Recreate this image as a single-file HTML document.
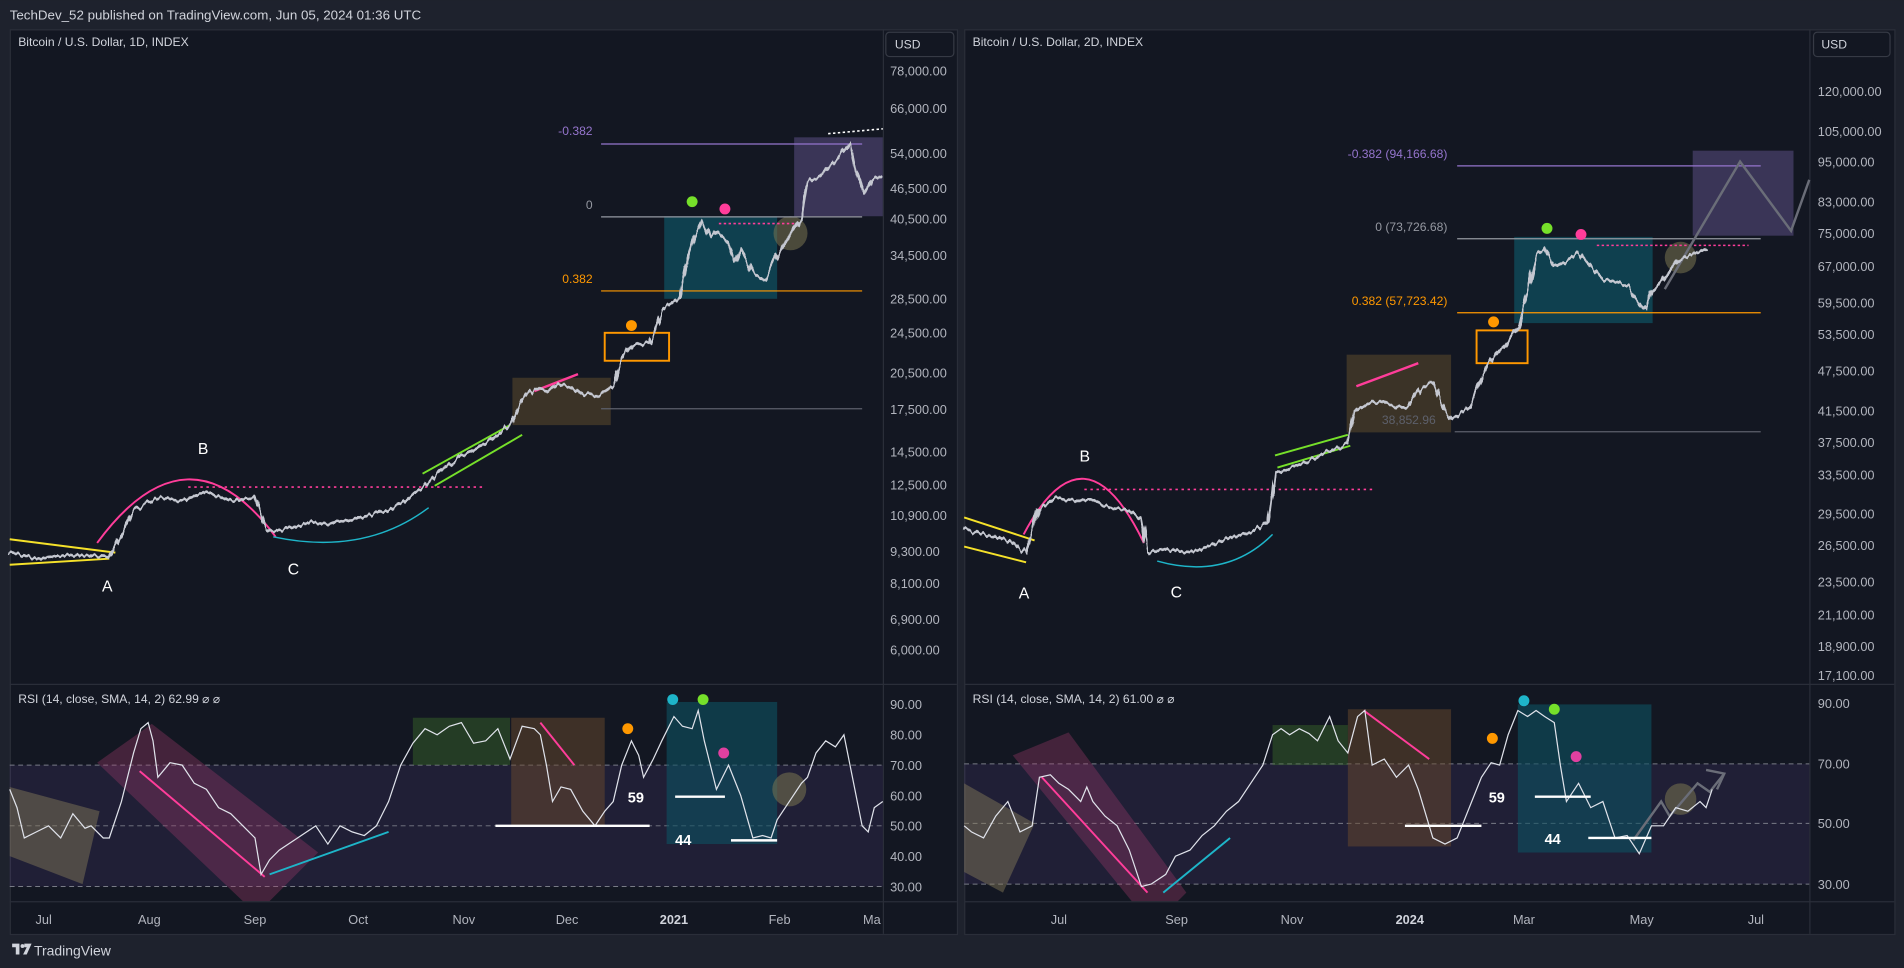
<!DOCTYPE html>
<html><head><meta charset="utf-8"><style>
html,body{margin:0;padding:0;background:#1e222d;overflow:hidden}
svg{display:block}
text{font-family:"Liberation Sans",sans-serif}
</style></head><body>
<svg width="1904" height="968" viewBox="0 0 1568 797" xmlns="http://www.w3.org/2000/svg">
<defs>
<filter id="jit" x="-5%" y="-20%" width="110%" height="140%">
<feTurbulence type="fractalNoise" baseFrequency="0.35 0.02" numOctaves="1" seed="3" result="n"/>
<feDisplacementMap in="SourceGraphic" in2="n" scale="7" xChannelSelector="G" yChannelSelector="R"/>
</filter>
</defs>
<rect width="1568" height="797" fill="#1e222d"/>
<text x="8" y="16" fill="#d1d4dc" font-size="11">TechDev_52 published on TradingView.com, Jun 05, 2024 01:36 UTC</text>

<rect x="8.5" y="24.5" width="780" height="745" fill="#131722" stroke="#2a2e39"/>
<rect x="794.5" y="24.5" width="766" height="745" fill="#131722" stroke="#2a2e39"/>
<g stroke="#2a2e39" stroke-width="1">
<line x1="727.5" y1="24" x2="727.5" y2="769"/><line x1="8" y1="563.5" x2="788" y2="563.5"/><line x1="8" y1="742.5" x2="788" y2="742.5"/>
<line x1="1490.5" y1="24" x2="1490.5" y2="769"/><line x1="794" y1="563.5" x2="1560" y2="563.5"/><line x1="794" y1="742.5" x2="1560" y2="742.5"/>
</g>

<rect x="8" y="630" width="719" height="100" fill="#7e57c2" fill-opacity="0.13"/>
<rect x="794" y="629" width="696" height="99" fill="#7e57c2" fill-opacity="0.13"/>
<g stroke="#787b86" stroke-dasharray="4 3" stroke-width="0.8">
<line x1="8" y1="630" x2="727" y2="630"/><line x1="8" y1="680" x2="727" y2="680"/><line x1="8" y1="730" x2="727" y2="730"/>
<line x1="794" y1="629" x2="1490" y2="629"/><line x1="794" y1="678" x2="1490" y2="678"/><line x1="794" y1="728" x2="1490" y2="728"/>
</g>

<g fill="#d1d4dc" font-size="10">
<text x="15" y="38">Bitcoin / U.S. Dollar, 1D, INDEX</text>
<text x="801" y="38">Bitcoin / U.S. Dollar, 2D, INDEX</text>
<text x="15" y="579">RSI (14, close, SMA, 14, 2)  62.99  ⌀  ⌀</text>
<text x="801" y="579">RSI (14, close, SMA, 14, 2)  61.00  ⌀  ⌀</text>
</g>
<rect x="729.5" y="26.5" width="56" height="20" rx="3" fill="#131722" stroke="#363a45"/>
<rect x="1493.5" y="26.5" width="63" height="20" rx="3" fill="#131722" stroke="#363a45"/>
<text x="737" y="40" fill="#d1d4dc" font-size="10">USD</text>
<text x="1500" y="40" fill="#d1d4dc" font-size="10">USD</text>

<g fill="#b2b5be" font-size="10.5">
<text x="733" y="62">78,000.00</text><text x="733" y="93">66,000.00</text><text x="733" y="130">54,000.00</text><text x="733" y="159">46,500.00</text><text x="733" y="184">40,500.00</text><text x="733" y="214">34,500.00</text><text x="733" y="250">28,500.00</text><text x="733" y="278">24,500.00</text><text x="733" y="311">20,500.00</text><text x="733" y="341">17,500.00</text><text x="733" y="376">14,500.00</text><text x="733" y="403">12,500.00</text><text x="733" y="428">10,900.00</text><text x="733" y="458">9,300.00</text><text x="733" y="484">8,100.00</text><text x="733" y="514">6,900.00</text><text x="733" y="539">6,000.00</text>
<text x="733" y="584">90.00</text><text x="733" y="609">80.00</text><text x="733" y="634">70.00</text><text x="733" y="659">60.00</text><text x="733" y="684">50.00</text><text x="733" y="709">40.00</text><text x="733" y="734">30.00</text>
<text x="1497" y="79">120,000.00</text><text x="1497" y="112">105,000.00</text><text x="1497" y="137">95,000.00</text><text x="1497" y="170">83,000.00</text><text x="1497" y="196">75,000.00</text><text x="1497" y="223">67,000.00</text><text x="1497" y="253">59,500.00</text><text x="1497" y="279">53,500.00</text><text x="1497" y="309">47,500.00</text><text x="1497" y="342">41,500.00</text><text x="1497" y="368">37,500.00</text><text x="1497" y="395">33,500.00</text><text x="1497" y="427">29,500.00</text><text x="1497" y="453">26,500.00</text><text x="1497" y="483">23,500.00</text><text x="1497" y="510">21,100.00</text><text x="1497" y="536">18,900.00</text><text x="1497" y="560">17,100.00</text>
<text x="1497" y="583">90.00</text><text x="1497" y="633">70.00</text><text x="1497" y="682">50.00</text><text x="1497" y="732">30.00</text>
</g>
<g fill="#b2b5be" font-size="10.5" text-anchor="middle">
<text x="36" y="761">Jul</text><text x="123" y="761">Aug</text><text x="210" y="761">Sep</text><text x="295" y="761">Oct</text><text x="382" y="761">Nov</text><text x="467" y="761">Dec</text><text x="555" y="761" font-weight="bold" fill="#d1d4dc">2021</text><text x="642" y="761">Feb</text><text x="718" y="761">Ma</text>
<text x="872" y="761">Jul</text><text x="969" y="761">Sep</text><text x="1064" y="761">Nov</text><text x="1161" y="761" font-weight="bold" fill="#d1d4dc">2024</text><text x="1255" y="761">Mar</text><text x="1352" y="761">May</text><text x="1446" y="761">Jul</text>
</g>

<!-- LEFT MAIN -->
<rect x="422" y="311" width="81" height="39" fill="#5d4a2c" fill-opacity="0.55"/>
<rect x="547" y="178" width="93" height="68" fill="#0e5263" fill-opacity="0.7"/>
<rect x="654" y="113" width="73" height="65" fill="#6a5a9a" fill-opacity="0.45"/>
<circle cx="651" cy="192" r="14" fill="#7a7550" fill-opacity="0.55"/>
<line x1="495" y1="118.5" x2="710" y2="118.5" stroke="#9575cd"/>
<line x1="495" y1="178.5" x2="710" y2="178.5" stroke="#9598a1"/>
<line x1="495" y1="239.5" x2="710" y2="239.5" stroke="#ff9800"/>
<line x1="495" y1="336.5" x2="710" y2="336.5" stroke="#5d606b"/>
<g font-size="10" text-anchor="end"><text x="488" y="111" fill="#9575cd">-0.382</text><text x="488" y="172" fill="#9598a1">0</text><text x="488" y="233" fill="#ff9800">0.382</text></g>
<line x1="8" y1="444" x2="95" y2="455" stroke="#f5e12a" stroke-width="1.6"/>
<line x1="8" y1="465" x2="90" y2="460" stroke="#f5e12a" stroke-width="1.6"/>
<path d="M80 447 Q155 345 227 442" fill="none" stroke="#ff3d9a" stroke-width="1.6"/>
<line x1="155" y1="401" x2="400" y2="401" stroke="#ff3d9a" stroke-dasharray="2 3" stroke-width="1.3"/>
<path d="M225 442 Q300 458 353 418" fill="none" stroke="#1eb5c9" stroke-width="1.2"/>
<line x1="348" y1="390" x2="420" y2="350" stroke="#76e02a" stroke-width="1.6"/>
<line x1="358" y1="400" x2="430" y2="358" stroke="#76e02a" stroke-width="1.6"/>
<line x1="440" y1="322" x2="476" y2="308" stroke="#ff3d9a" stroke-width="2"/>
<rect x="498" y="274" width="53" height="23" fill="none" stroke="#ff9800" stroke-width="1.6"/>
<line x1="592" y1="184" x2="655" y2="184" stroke="#ff3d9a" stroke-dasharray="2 2" stroke-width="1.3"/>
<line x1="682" y1="110" x2="727" y2="106" stroke="#fff" stroke-dasharray="2 2" stroke-width="1.3"/>
<polyline filter="url(#jit)" fill="none" stroke="#c4c7d0" stroke-width="2.2" stroke-linejoin="round" points="8,455 30,460 60,457 90,458 100,440 110,420 130,410 150,412 170,405 190,412 210,410 220,438 240,435 255,430 270,432 300,425 320,420 330,415 350,400 360,390 380,375 400,365 420,350 430,330 440,320 450,322 460,315 470,318 480,325 495,325 505,318 512,295 520,285 535,282 545,255 560,245 565,220 570,200 578,180 585,195 590,190 600,200 605,215 610,205 620,225 630,230 640,210 650,195 660,180 665,150 675,145 680,140 690,130 700,118 705,140 712,160 718,148 727,145"/>
<circle cx="520" cy="268" r="4.5" fill="#ff9800"/><circle cx="570" cy="166" r="4.5" fill="#76e02a"/><circle cx="597" cy="172" r="4.5" fill="#ff3d9a"/>
<g fill="#fff" font-size="13"><text x="84" y="487">A</text><text x="163" y="374">B</text><text x="237" y="473">C</text></g>

<!-- LEFT RSI -->
<polygon points="8,648 82,668 68,728 8,705" fill="#8a7f5a" fill-opacity="0.45"/>
<polygon points="80,628 125,596 262,702 222,742 200,742" fill="#a03a6a" fill-opacity="0.35"/>
<rect x="340" y="591" width="80" height="39" fill="#3a6a2a" fill-opacity="0.45"/>
<rect x="421" y="591" width="77" height="89" fill="#6a4a2c" fill-opacity="0.5"/>
<rect x="549" y="578" width="91" height="117" fill="#0e5263" fill-opacity="0.6"/>
<circle cx="650" cy="650" r="14" fill="#7a7550" fill-opacity="0.55"/>
<line x1="115" y1="635" x2="218" y2="722" stroke="#ff3d9a" stroke-width="1.6"/>
<line x1="222" y1="720" x2="320" y2="685" stroke="#1eb5c9" stroke-width="1.6"/>
<line x1="445" y1="595" x2="473" y2="630" stroke="#ff3d9a" stroke-width="1.6"/>
<polyline fill="none" stroke="#e0e3eb" stroke-width="1" points="8,650 14,665 20,690 30,685 40,680 50,690 60,670 70,682 75,680 85,690 90,690 100,660 110,620 116,600 122,595 126,610 130,640 140,628 150,630 160,645 170,650 180,665 190,670 200,680 210,690 215,720 222,708 230,700 245,690 260,680 270,695 280,680 290,685 300,688 310,680 320,660 330,630 340,612 350,600 360,605 370,598 380,595 390,612 400,610 410,600 420,625 430,598 440,600 445,605 450,630 455,660 462,648 470,650 480,668 490,680 498,668 505,660 512,630 520,610 526,622 530,640 538,625 545,610 550,600 555,590 562,598 570,600 575,585 580,610 590,650 595,640 600,630 610,655 620,690 628,688 635,690 640,675 650,660 660,645 665,640 672,620 680,610 688,615 695,605 702,640 710,680 715,685 720,665 727,660"/>
<g stroke="#fff" stroke-width="2"><line x1="408" y1="680" x2="535" y2="680"/><line x1="556" y1="656" x2="597" y2="656"/><line x1="602" y1="692" x2="640" y2="692"/></g>
<g fill="#fff" font-size="12" font-weight="bold"><text x="517" y="661">59</text><text x="556" y="696">44</text></g>
<circle cx="517" cy="600" r="4.5" fill="#ff9800"/><circle cx="554" cy="576" r="4.5" fill="#1eb5c9"/><circle cx="579" cy="576" r="4.5" fill="#76e02a"/><circle cx="596" cy="620" r="4.5" fill="#e040a0"/>

<!-- RIGHT MAIN -->
<rect x="1109" y="292" width="86" height="64" fill="#5d4a2c" fill-opacity="0.55"/>
<rect x="1247" y="195" width="114" height="71" fill="#0e5263" fill-opacity="0.7"/>
<rect x="1394" y="124" width="83" height="70" fill="#6a5a9a" fill-opacity="0.45"/>
<circle cx="1384" cy="212" r="13" fill="#7a7550" fill-opacity="0.55"/>
<line x1="1200" y1="136.5" x2="1450" y2="136.5" stroke="#9575cd"/>
<line x1="1200" y1="196.5" x2="1450" y2="196.5" stroke="#9598a1"/>
<line x1="1200" y1="257.5" x2="1450" y2="257.5" stroke="#ff9800"/>
<line x1="1198" y1="355.5" x2="1450" y2="355.5" stroke="#5d606b"/>
<g font-size="10" text-anchor="end"><text x="1192" y="130" fill="#9575cd">-0.382 (94,166.68)</text><text x="1192" y="190" fill="#9598a1">0 (73,726.68)</text><text x="1192" y="251" fill="#ff9800">0.382 (57,723.42)</text></g>
<text x="1138" y="349" fill="#5d606b" font-size="10">38,852.96</text>
<line x1="794" y1="426" x2="852" y2="445" stroke="#f5e12a" stroke-width="1.6"/>
<line x1="794" y1="450" x2="845" y2="463" stroke="#f5e12a" stroke-width="1.6"/>
<path d="M843 440 Q893 345 942 447" fill="none" stroke="#ff3d9a" stroke-width="1.6"/>
<line x1="893" y1="403" x2="1130" y2="403" stroke="#ff3d9a" stroke-dasharray="2 3" stroke-width="1.3"/>
<path d="M953 462 Q1010 478 1048 440" fill="none" stroke="#1eb5c9" stroke-width="1.2"/>
<line x1="1050" y1="375" x2="1110" y2="358" stroke="#76e02a" stroke-width="1.6"/>
<line x1="1052" y1="385" x2="1112" y2="367" stroke="#76e02a" stroke-width="1.6"/>
<line x1="1117" y1="318" x2="1168" y2="299" stroke="#ff3d9a" stroke-width="2"/>
<rect x="1216" y="272" width="42" height="27" fill="none" stroke="#ff9800" stroke-width="1.6"/>
<line x1="1315" y1="202" x2="1440" y2="202" stroke="#ff3d9a" stroke-dasharray="2 2" stroke-width="1.3"/>
<polyline fill="none" stroke="#6a6d78" stroke-width="2" points="1371,238 1433,133 1475,190 1490,148"/>
<polyline filter="url(#jit)" fill="none" stroke="#c4c7d0" stroke-width="2.2" stroke-linejoin="round" points="794,435 810,440 830,445 845,455 855,420 870,410 885,412 900,412 915,418 930,420 940,428 945,455 960,452 980,455 1000,448 1015,442 1030,438 1045,430 1050,390 1065,384 1080,378 1095,372 1110,365 1115,340 1125,333 1140,330 1150,335 1160,335 1170,320 1180,315 1188,335 1195,345 1210,335 1218,315 1225,300 1235,288 1240,285 1250,270 1258,240 1265,210 1272,205 1280,220 1290,215 1300,208 1310,220 1320,230 1330,232 1340,235 1350,250 1355,255 1360,240 1370,230 1380,215 1392,210 1405,205"/>
<circle cx="1230" cy="265" r="4.5" fill="#ff9800"/><circle cx="1274" cy="188" r="4.5" fill="#76e02a"/><circle cx="1302" cy="193" r="4.5" fill="#ff3d9a"/>
<g fill="#fff" font-size="13"><text x="839" y="493">A</text><text x="889" y="380">B</text><text x="964" y="492">C</text></g>

<!-- RIGHT RSI -->
<polygon points="794,645 852,678 826,735 794,718" fill="#8a7f5a" fill-opacity="0.45"/>
<polygon points="834,622 880,603 977,735 970,742 932,742" fill="#a03a6a" fill-opacity="0.35"/>
<rect x="1048" y="597" width="62" height="33" fill="#3a6a2a" fill-opacity="0.45"/>
<rect x="1110" y="584" width="85" height="113" fill="#6a4a2c" fill-opacity="0.5"/>
<rect x="1250" y="580" width="110" height="122" fill="#0e5263" fill-opacity="0.6"/>
<circle cx="1384" cy="658" r="13" fill="#7a7550" fill-opacity="0.55"/>
<line x1="858" y1="640" x2="945" y2="735" stroke="#ff3d9a" stroke-width="1.6"/>
<line x1="958" y1="735" x2="1013" y2="690" stroke="#1eb5c9" stroke-width="1.6"/>
<line x1="1123" y1="585" x2="1177" y2="625" stroke="#ff3d9a" stroke-width="1.6"/>
<polyline fill="none" stroke="#6a6d78" stroke-width="2" points="1345,692 1368,660 1375,672 1398,645 1408,652 1420,637"/>
<polyline fill="none" stroke="#6a6d78" stroke-width="2" points="1405,634 1420,637 1414,650"/>
<polyline fill="none" stroke="#e0e3eb" stroke-width="1" points="794,680 800,685 810,690 820,672 830,660 840,685 850,680 856,640 865,638 872,645 880,650 890,660 895,648 900,660 910,672 920,680 930,700 940,730 948,728 960,720 968,705 980,700 990,688 1000,680 1010,668 1020,660 1030,645 1040,630 1048,605 1055,600 1062,605 1070,600 1078,604 1085,610 1095,590 1102,610 1110,620 1118,590 1124,585 1130,630 1140,625 1150,640 1160,630 1168,650 1180,690 1190,695 1200,690 1210,665 1220,640 1228,628 1235,630 1242,605 1250,585 1258,590 1265,585 1272,590 1280,595 1285,630 1290,660 1300,645 1310,665 1320,660 1330,690 1340,688 1350,703 1360,680 1370,680 1380,665 1390,668 1400,660 1405,665 1410,650"/>
<g stroke="#fff" stroke-width="2"><line x1="1157" y1="680" x2="1220" y2="680"/><line x1="1264" y1="656" x2="1310" y2="656"/><line x1="1308" y1="690" x2="1360" y2="690"/></g>
<g fill="#fff" font-size="12" font-weight="bold"><text x="1226" y="661">59</text><text x="1272" y="695">44</text></g>
<circle cx="1229" cy="608" r="4.5" fill="#ff9800"/><circle cx="1255" cy="577" r="4.5" fill="#1eb5c9"/><circle cx="1280" cy="584" r="4.5" fill="#76e02a"/><circle cx="1298" cy="623" r="4.5" fill="#e040a0"/>

<g fill="#d1d4dc">
<path d="M10 777 h6 v9 h-3 v-6 h-3z"/>
<circle cx="18.5" cy="779" r="1.6"/>
<path d="M20 777 h6 l-4 9 h-3 l3 -6 h-2z"/>
</g>
<text x="28" y="787" fill="#d1d4dc" font-size="11.5">TradingView</text>
</svg>
</body></html>
